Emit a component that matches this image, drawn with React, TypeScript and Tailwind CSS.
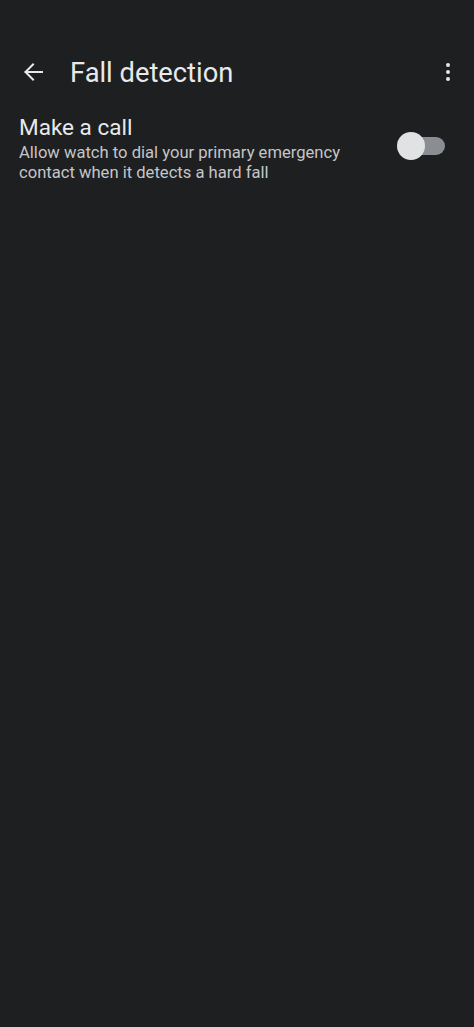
import React from "react";

export default function App() {
  return (
    <div
      className="w-[474px] h-[1027px] bg-[#1e1f21] text-[#e6e7e9] overflow-hidden"
      style={{ fontFamily: "Roboto, 'Noto Sans', sans-serif" }}
    >
      <div className="h-[40px]" />
      <div className="flex items-center h-[64px]">
        <div className="w-[70px] flex items-center pl-[23px]">
          <svg width="20" height="20" viewBox="0 0 20 20">
            <path d="M19 10H2.5M10 2.5L2.5 10L10 17.5" fill="none" stroke="#e6e7e9" strokeWidth="2" strokeLinecap="square" />
          </svg>
        </div>
        <div className="flex-1 text-[27.3px] leading-[32px] text-[#e8e9eb] mt-[2px]">Fall detection</div>
        <div className="w-[50px] flex items-center justify-center pr-[2px]">
          <svg width="24" height="24" viewBox="0 0 24 24">
            <circle cx="12" cy="5" r="2" fill="#e6e7e9" />
            <circle cx="12" cy="12" r="2" fill="#e6e7e9" />
            <circle cx="12" cy="19" r="2" fill="#e6e7e9" />
          </svg>
        </div>
      </div>
      <div className="flex items-center pl-[19px] pr-[29px] pt-[9px]">
        <div className="flex-1">
          <div className="text-[22.5px] leading-[28px] text-[#e8e9eb]">Make a call</div>
          <div className="text-[16.6px] leading-[20px] text-[#c4c6c9] mt-[2px]">
            Allow watch to dial your primary emergency
            <br />
            contact when it detects a hard fall
          </div>
        </div>
        <div className="relative w-[48px] h-[28px] flex items-center mb-[4px]">
          <div className="absolute right-0 w-[44px] h-[18px] rounded-full bg-[#8a8d91]" />
          <div className="absolute left-0 w-[28px] h-[28px] rounded-full bg-[#e1e2e4]" />
        </div>
      </div>
    </div>
  );
}
